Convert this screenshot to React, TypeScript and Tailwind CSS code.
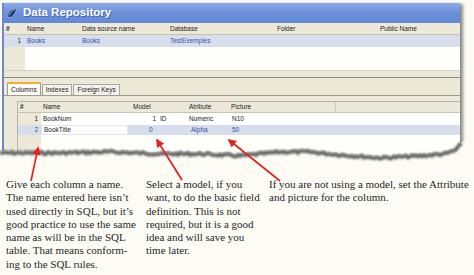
import React from "react";

const BG = "#fcfcf5";

function rand(seed: number) {
  let s = seed;
  return () => {
    s = (s * 9301 + 49297) % 233280;
    return s / 233280;
  };
}

const ctrl: [number, number][] = [
  [0, 151], [60, 151], [110, 150], [160, 152], [200, 152], [240, 154], [280, 150],
  [310, 150], [340, 153], [380, 156], [420, 154], [445, 152], [456, 148], [463, 140],
];

function baseY(x: number) {
  for (let i = 0; i < ctrl.length - 1; i++) {
    const [x0, y0] = ctrl[i];
    const [x1, y1] = ctrl[i + 1];
    if (x >= x0 && x <= x1) return y0 + ((y1 - y0) * (x - x0)) / (x1 - x0);
  }
  return ctrl[ctrl.length - 1][1];
}

const r = rand(7);
const edgePts: string[] = [];
for (let x = 0; x <= 463; x += 2) {
  const y = baseY(x) + (r() - 0.5) * 2.4;
  edgePts.push(`${x},${y.toFixed(1)}`);
}
const edgeLine = "M" + edgePts.join(" L");
const edgeFill = edgeLine + " L474,140 L474,275 L0,275 Z";

const topCols = [
  { w: 21, label: "#" },
  { w: 55, label: "Name" },
  { w: 88, label: "Data source name" },
  { w: 107, label: "Database" },
  { w: 103, label: "Folder" },
  { w: 81, label: "Public Name" },
];

function TitleIcon() {
  return (
    <svg width="11" height="12" viewBox="0 0 11 12">
      <path d="M9.8 1 C6 1.6 2.2 4.4 1.2 8.6 L3.2 11 C7 10 9.6 6.4 10.4 2.2 Z" fill="#1d3c78" stroke="#c9d8f4" strokeWidth="0.6" />
      <path d="M8.8 2.4 C6.2 3.4 4 5.6 3 8.4" stroke="#8ab8ee" strokeWidth="1" fill="none" />
    </svg>
  );
}

export default function App() {
  const ui = { fontFamily: '"Liberation Sans", Arial, sans-serif' };
  const serif = { fontFamily: '"Liberation Serif", "Times New Roman", serif' };
  return (
    <div className="relative w-[474px] h-[275px] overflow-hidden" style={{ backgroundColor: BG }}>
      {/* Window */}
      <div
        className="ml-[2px] mt-[3px] w-[458px] h-[158px] overflow-hidden border-l-[2px] border-[#7186cf] bg-[#ece9d8] shadow-[3px_1px_3px_rgba(0,0,0,0.45)]"
        style={ui}
      >
        {/* Title bar */}
        <div className="h-[20px] flex items-center gap-[6px] pl-[2px] bg-gradient-to-b from-[#8eaae8] via-[#6b8fd9] to-[#6389d6]">
          <TitleIcon />
          <span className="text-[11.5px] font-bold text-white leading-none [text-shadow:1px_1px_0_rgba(40,60,120,0.5)]">
            Data Repository
          </span>
        </div>
        {/* Top grid header */}
        <div className="flex h-[12px] items-center bg-[#ece9d8] border-b border-[#c9c4b0] text-[6.5px] text-[#222]">
          {topCols.map((c, i) => (
            <div key={i} className="h-full flex items-center pl-[2px]" style={{ width: c.w }}>
              {c.label === "#" ? <span className="font-bold">#</span> : c.label}
            </div>
          ))}
        </div>
        {/* Top grid row */}
        <div className="flex h-[12px] items-center bg-[#d6deec] text-[6.5px] text-[#3352a8]">
          <div className="w-[21px] text-right pr-[4px] text-[#333]">1</div>
          <div className="w-[55px] pl-[2px]">Books</div>
          <div className="w-[88px] pl-[2px]">Books</div>
          <div className="w-[107px] pl-[2px]">TestExemples</div>
        </div>
        <div className="flex h-[23px] bg-white">
          <div className="w-[21px] bg-[#ece9d8]" />
          <div className="flex-1 bg-[#fefefb]" />
        </div>
        {/* splitter */}
        <div className="h-[7px] border-t border-[#d6d2c2] bg-[#ebe7d9]" />
        <div className="h-[1px] bg-[#8e8a7e]" />
        {/* Lower panel */}
        <div className="bg-[#ece9d8] pt-[5px]">
          <div className="flex items-end pl-[3px] h-[12px] text-[6.5px] text-[#222]">
            <div className="h-[13px] px-[3px] flex items-center bg-[#fafaf6] border border-b-0 border-[#9c9c90] border-t-[2px] border-t-[#f0b030] rounded-t-[1px]">
              Columns
            </div>
            <div className="h-[11px] px-[3px] flex items-center bg-[#f4f2ea] border border-b-0 border-[#a9a69a] ml-[1px]">
              Indexes
            </div>
            <div className="h-[11px] px-[3px] flex items-center bg-[#f4f2ea] border border-b-0 border-[#a9a69a] ml-[1px]">
              Foreign Keys
            </div>
          </div>
          <div className="border-t border-[#9c9c90] pt-[5px] pl-[13px]">
            <div className="border-t border-l border-[#b8b4a4]">
              {/* Lower header */}
              <div className="flex h-[11px] items-center bg-[#ebe8db] border-b border-[#c9c4b0] text-[6.5px] text-[#222]">
                <div className="w-[23px] pl-[2px] font-bold">#</div>
                <div className="w-[87px] pl-[2px]">Name</div>
                <div className="w-[58px] pl-[5px]">Model</div>
                <div className="w-[43px] pl-[3px]">Atribute</div>
                <div className="w-[107px] pl-[2px] h-full flex items-center border-r border-[#d0ccbc]">Picture</div>
              </div>
              {/* Row 1 */}
              <div className="flex h-[12px] items-center bg-white text-[6.5px] text-[#222]">
                <div className="w-[23px] h-full flex items-center justify-end pr-[3px] bg-[#ece9d8]">1</div>
                <div className="w-[87px] pl-[2px]">BookNum</div>
                <div className="w-[58px] flex">
                  <span className="w-[28px] text-right">1</span>
                  <span className="pl-[4px]">ID</span>
                </div>
                <div className="w-[43px] pl-[3px]">Numeric</div>
                <div className="w-[107px] pl-[3px]">N10</div>
              </div>
              {/* Row 2 */}
              <div className="flex h-[10px] items-center bg-[#d6deec] text-[6.5px] text-[#3352a8]">
                <div className="w-[23px] h-full flex items-center justify-end pr-[3px]">2</div>
                <div className="w-[87px] h-full flex items-center bg-white pl-[2px] text-[#222] border border-[#e4e4ee]">
                  BookTitle
                </div>
                <div className="w-[58px] pl-[21px]">0</div>
                <div className="w-[43px] pl-[5px]">Alpha</div>
                <div className="w-[107px] pl-[3px]">50</div>
              </div>
              <div className="flex h-[30px]">
                <div className="w-[23px] bg-[#ece9d8]" />
                <div className="flex-1 bg-[#fefefb]" />
              </div>
            </div>
          </div>
        </div>
      </div>

      {/* Torn edge and arrows */}
      <svg className="absolute left-0 top-0 pointer-events-none" width="474" height="275" viewBox="0 0 474 275">
        <defs>
          <filter id="blur" x="-5%" y="-50%" width="110%" height="200%">
            <feGaussianBlur stdDeviation="1.2" />
          </filter>
          <marker id="ah" viewBox="0 0 10 10" refX="8" refY="5" markerWidth="6" markerHeight="5" orient="auto">
            <path d="M0 0 L10 5 L0 10 Z" fill="#e3231f" />
          </marker>
        </defs>
        <path d={edgeFill} fill={BG} />
        <path d={edgeLine} stroke="#3a3a3a" strokeWidth="3.6" fill="none" opacity="0.8" filter="url(#blur)" transform="translate(0,2)" />
        <path d={edgeLine} stroke="#8a8a8a" strokeWidth="0.8" fill="none" opacity="0.7" />
        <line x1="31" y1="181" x2="38" y2="148" stroke="#e3231f" strokeWidth="1.7" markerEnd="url(#ah)" />
        <line x1="182" y1="180" x2="157" y2="140" stroke="#e3231f" strokeWidth="1.7" markerEnd="url(#ah)" />
        <line x1="280" y1="181" x2="229" y2="140" stroke="#e3231f" strokeWidth="1.7" markerEnd="url(#ah)" />
      </svg>

      {/* Callout text */}
      <div className="relative flex mt-[17px] pl-[6px] text-[11px] leading-[13.3px] text-[#262626] whitespace-nowrap" style={serif}>
        <div className="w-[140px]">
          Give each column a name.<br />
          The name entered here isn’t<br />
          used directly in SQL, but it’s<br />
          good practice to use the same<br />
          name as will be in the SQL<br />
          table. That means conform-<br />
          ing to the SQL rules.
        </div>
        <div className="w-[123px]">
          Select a model, if you<br />
          want, to do the basic field<br />
          definition. This is not<br />
          required, but it is a good<br />
          idea and will save you<br />
          time later.
        </div>
        <div>
          If you are not using a model, set the Attribute<br />
          and picture for the column.
        </div>
      </div>
    </div>
  );
}
